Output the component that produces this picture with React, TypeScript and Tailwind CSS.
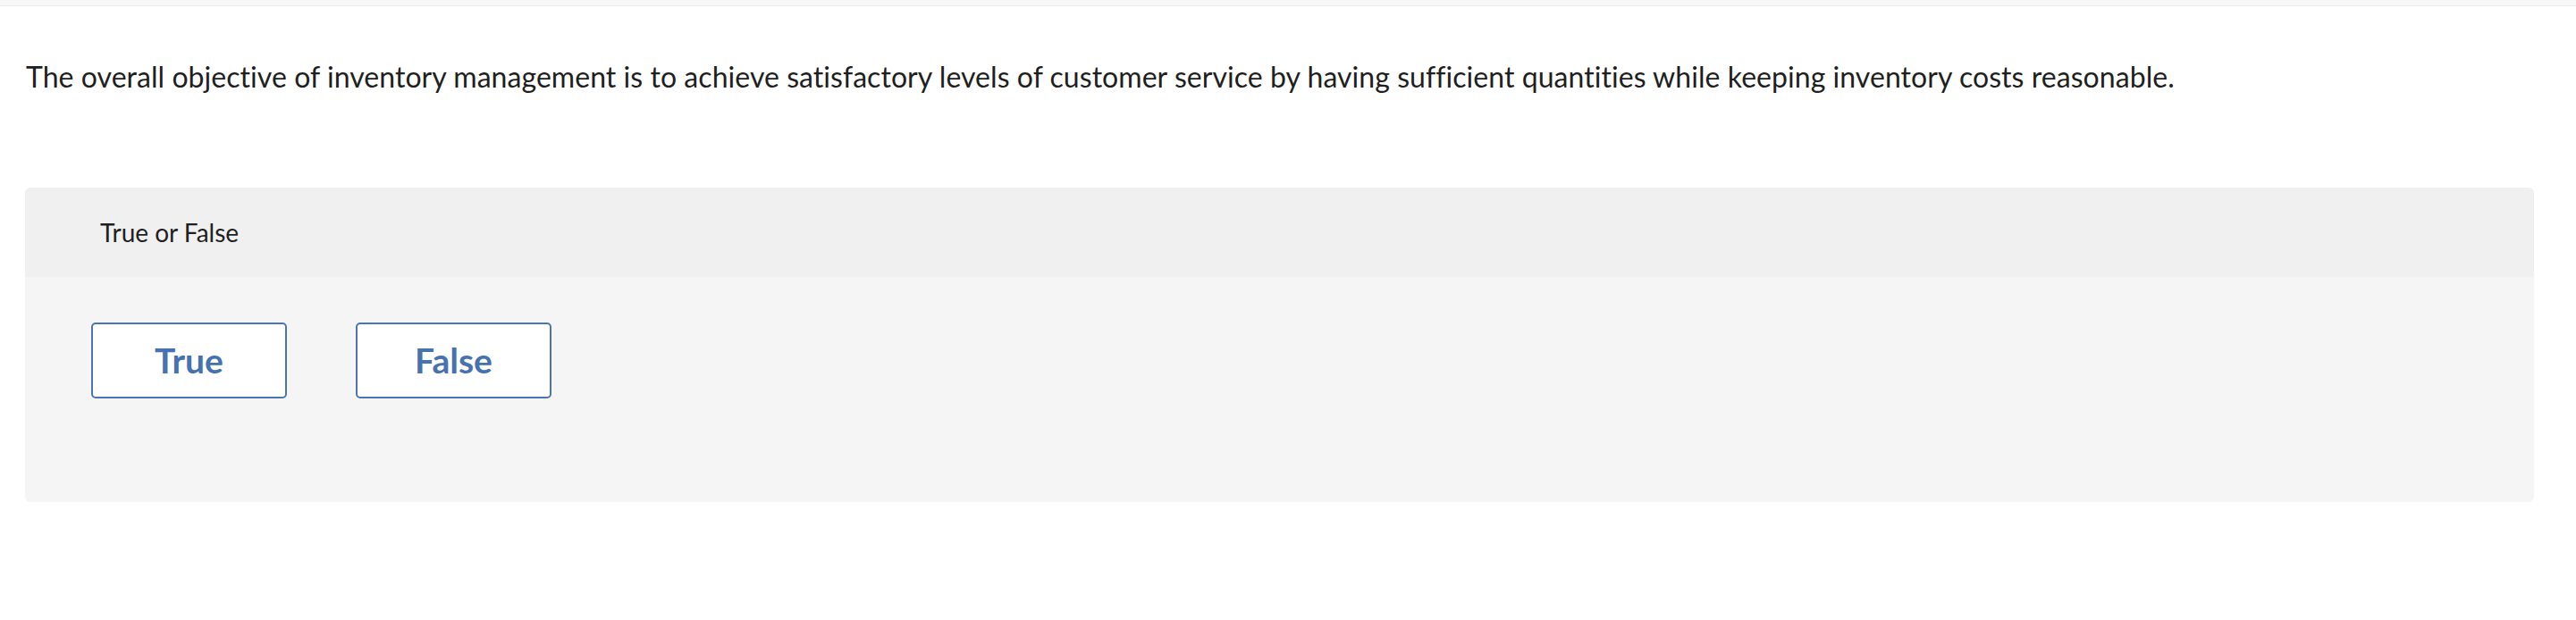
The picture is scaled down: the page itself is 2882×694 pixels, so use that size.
export default function App() {
  return (
    <div className="min-h-screen w-full bg-white font-['Lato','Noto_Sans',sans-serif] text-[#1f1f1f] [font-variant-ligatures:none]">
      {/* top strip */}
      <div className="h-[7px] border-b border-[#ebebeb] bg-[#f8f8f8]" />

      <div className="pl-[28px] pr-[47px]">
        <p className="mt-[59px] pl-[1px] text-[32px] leading-[40px] tracking-[0.05px]">
          The overall objective of inventory management is to achieve satisfactory levels of customer service by having
          sufficient quantities while keeping inventory costs reasonable.
        </p>

        <div className="mt-[104px] overflow-hidden rounded-[6px]">
          <div className="flex h-[100px] items-center bg-[#f0f0f0] pl-[84px]">
            <span className="text-[28px]">True or False</span>
          </div>
          <div className="flex h-[252px] items-start gap-[77px] bg-[#f5f5f5] pl-[74px] pt-[51px]">
            <button className="flex h-[85px] w-[219px] items-center justify-center rounded-[5px] border-2 border-[#4a75b3] bg-white text-[39px] font-bold text-[#4672b0]">
              True
            </button>
            <button className="flex h-[85px] w-[219px] items-center justify-center rounded-[5px] border-2 border-[#4a75b3] bg-white text-[39px] font-bold text-[#4672b0]">
              False
            </button>
          </div>
        </div>
      </div>
    </div>
  );
}
